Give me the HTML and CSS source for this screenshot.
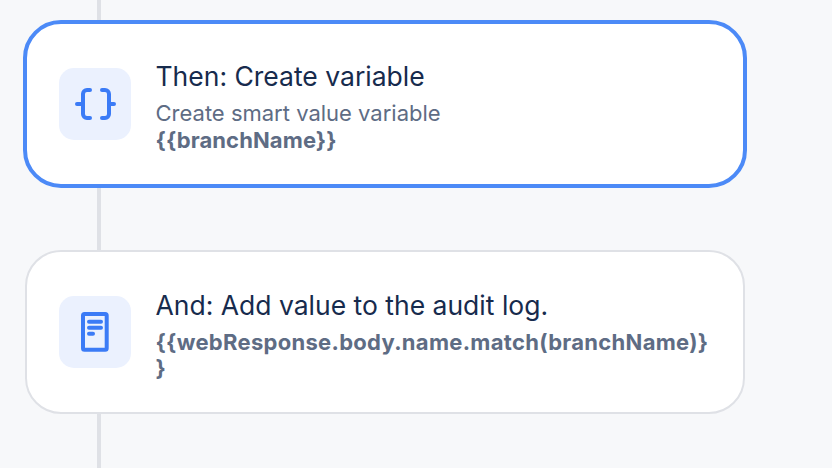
FILE: index.html
```html
<!DOCTYPE html>
<html lang="en">
<head>
    <meta charset="UTF-8">
    <meta name="viewport" content="width=device-width, initial-scale=1.0">
    <title>Automation rule</title>
    <link rel="stylesheet" href="styles.css">
</head>
<body>
    <div class="flow">
        <div class="line"></div>
        <div class="card card-selected">
            <div class="icon-tile">
                <svg width="48" height="48" viewBox="0 0 48 48" fill="none" stroke="#3b7bf6" stroke-width="4" stroke-linecap="round" stroke-linejoin="round">
                    <path d="M19 10h-3a4 4 0 0 0-4 4v20a4 4 0 0 0 4 4h3M6 24h6"/>
                    <path d="M31 10h3a4 4 0 0 1 4 4v20a4 4 0 0 1-4 4h-3M38 24h5"/>
                </svg>
            </div>
            <div class="card-text">
                <h3>Then: Create variable</h3>
                <p class="sub">Create smart value variable</p>
                <p class="code">{{branchName}}</p>
            </div>
        </div>
        <div class="card">
            <div class="icon-tile">
                <svg width="48" height="48" viewBox="0 0 48 48" fill="none" stroke="#3b7bf6" stroke-width="4" stroke-linecap="round" stroke-linejoin="round">
                    <rect x="12" y="6" width="23.700" height="35.700" rx="1.500"/>
                    <path d="M18 13.700h12M18 19.700h12M18 25.700h4"/>
                </svg>
            </div>
            <div class="card-text">
                <h3>And: Add value to the audit log.</h3>
                <p class="code code-long">{{webResponse.body.name.match(branchName)}}</p>
            </div>
        </div>
    </div>
</body>
</html>
```

FILE: styles.css
```css
html, body {
    margin: 0;
    padding: 0;
}
body {
    font-family: Inter, "Liberation Sans", sans-serif;
    background-color: #f7f8fa;
    color: #172b4d;
    width: 832px;
    height: 468px;
    overflow: hidden;
}
.flow {
    position: relative;
    width: 720px;
    margin-left: 25px;
    padding-top: 22px;
}
.line {
    position: absolute;
    left: 72px;
    top: 0;
    width: 4px;
    height: 468px;
    background: #dfe1e6;
}
.card {
    position: relative;
    display: flex;
    align-items: center;
    gap: 24.500px;
    box-sizing: border-box;
    height: 164px;
    padding: 0 32px;
    background: #fff;
    border: 2px solid #dfe1e6;
    border-radius: 36px;
}
.card-selected {
    width: 724px;
    height: 168px;
    margin: -2px -2px 62px;
    border: 4px solid #4c8af7;
    border-radius: 38px;
}
.icon-tile {
    display: flex;
    align-items: center;
    justify-content: center;
    flex: none;
    width: 72px;
    height: 72px;
    background: #ebf1fe;
    border-radius: 15px;
}
.card-text {
    width: 558px;
    padding-top: 5px;
}
.card-text h3 {
    margin: 0 0 8px;
    font-size: 26.500px;
    line-height: 32px;
    font-weight: 400;
}
.sub {
    margin: 0;
    font-size: 22px;
    line-height: 27px;
    color: #5e6c84;
}
.code {
    margin: 0;
    font-size: 22px;
    line-height: 26px;
    font-weight: 700;
    color: #5e6c84;
    line-break: anywhere;
    letter-spacing: 0.1px;
}
.code-long {
    letter-spacing: 0.3px;
}
```
